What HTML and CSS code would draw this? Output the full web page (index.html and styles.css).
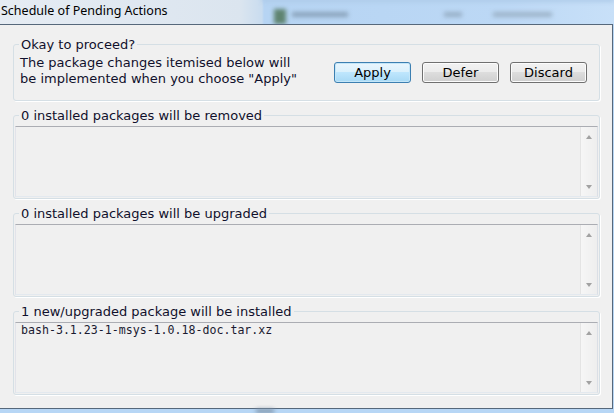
FILE: index.html
```html
<!doctype html>
<html>

<head>
    <link rel="stylesheet" href="styles.css">
</head>

<body>
    <div class="titlebar">
        <span class="title">Schedule of Pending Actions</span>
        <span class="glass glass-row"></span>
        <span class="glass glass-icon"></span>
        <span class="glass glass-name"></span>
        <span class="glass glass-type"></span>
        <span class="glass glass-date"></span>
    </div>

    <div class="window">
        <fieldset class="group">
            <legend>Okay to proceed?</legend>
            <div class="intro">
                <p class="intro-text">The package changes itemised below will<br>be implemented when you choose "Apply"</p>
                <div class="buttons">
                    <button class="btn btn-default">Apply</button>
                    <button class="btn">Defer</button>
                    <button class="btn">Discard</button>
                </div>
            </div>
        </fieldset>

        <fieldset class="group">
            <legend>0 installed packages will be removed</legend>
            <div class="listbox">
                <div class="items"></div>
                <div class="scrollbar"><span class="arrow up"></span><span class="arrow down"></span></div>
            </div>
        </fieldset>

        <fieldset class="group">
            <legend>0 installed packages will be upgraded</legend>
            <div class="listbox">
                <div class="items"></div>
                <div class="scrollbar"><span class="arrow up"></span><span class="arrow down"></span></div>
            </div>
        </fieldset>

        <fieldset class="group">
            <legend>1 new/upgraded package will be installed</legend>
            <div class="listbox">
                <div class="items">bash-3.1.23-1-msys-1.0.18-doc.tar.xz</div>
                <div class="scrollbar"><span class="arrow up"></span><span class="arrow down"></span></div>
            </div>
        </fieldset>
    </div>

    <div class="taskstrip"><span class="glass glass-thumb"></span></div>
</body>

</html>
```

FILE: styles.css
```css
body {
    margin: 0;
    width: 614px;
    height: 413px;
    overflow: hidden;
    background: #b8d6f4;
    font-family: "DejaVu Sans", sans-serif;
    color: #10102c;
}

/* glass title bar */
.titlebar {
    position: relative;
    height: 24px;
    overflow: hidden;
    background: linear-gradient(to right, #e6ecf3 0, #dbe5ef 240px, #c9dcef 262px, #b6d4f3 264px, #bcd8f5 500px, #c8e0f8 614px);
}

.title {
    display: block;
    padding-left: 1px;
    font-family: "Noto Sans", sans-serif;
    font-size: 12.5px;
    line-height: 21px;
    color: #000;
}

.glass {
    position: absolute;
    filter: blur(2px);
}

.glass-row {
    left: 262px;
    right: 0;
    top: -3px;
    height: 5px;
    background: #aecbe9;
}

.glass-icon {
    left: 274px;
    top: 9px;
    width: 12px;
    height: 15px;
    background: #5f8470;
}

.glass-name {
    left: 292px;
    top: 12px;
    width: 56px;
    height: 5px;
    background: #8aa3bb;
}

.glass-type {
    left: 444px;
    top: 12px;
    width: 18px;
    height: 5px;
    background: #98b0c7;
}

.glass-date {
    left: 493px;
    top: 12px;
    width: 59px;
    height: 5px;
    background: #9db4ca;
}

/* client area */
.window {
    width: 587px;
    padding: 12px 12px 13px 13px;
    background: #f0f0f0;
    border: 1px solid #56687b;
    border-left: none;
}

.group {
    margin: 7px 0 0;
    padding: 0 1px 1px;
    border: 1px solid #d5dfe5;
    border-radius: 3px;
    box-shadow: 1px 1px 0 #fff;
}

.group:first-child {
    margin-top: 0;
}

.group legend {
    margin-left: 4px;
    padding: 0 2px;
    font-size: 13px;
    line-height: 15px;
}

.intro {
    display: flex;
    justify-content: space-between;
    align-items: center;
    padding: 3px 11px 12px 5px;
}

.intro-text {
    margin: 0;
    font-size: 13px;
    line-height: 16px;
}

.buttons {
    display: flex;
    gap: 11px;
    margin-top: 2px;
}

.btn {
    width: 77px;
    height: 21px;
    padding: 0;
    font-family: "DejaVu Sans", sans-serif;
    font-size: 13px;
    color: #000;
    border: 1px solid #707070;
    border-radius: 3px;
    background: linear-gradient(#f2f2f2 0, #ebebeb 50%, #dddddd 50%, #cfcfcf 100%);
    box-shadow: inset 0 0 0 1px #fcfcfc;
}

.btn-default {
    border-color: #3c7fb1;
    background: linear-gradient(#eaf6fd 0, #d9f0fc 50%, #bee6fd 50%, #a7d9f5 100%);
    box-shadow: inset 0 0 0 1px #c4e6f8;
}

/* read-only list */
.listbox {
    display: flex;
    height: 71px;
    margin-top: 3px;
    box-sizing: border-box;
    border: 1px solid;
    border-color: #abadb3 #dbdfe6 #e3e9ef #e2e3ea;
    background: #f0f0f0;
}

.items {
    flex: 1;
    padding: 0 5px;
    font-family: "DejaVu Sans Mono", monospace;
    font-size: 11.6px;
    line-height: 14px;
    color: #1a1a30;
}

.scrollbar {
    display: flex;
    flex-direction: column;
    justify-content: space-between;
    align-items: center;
    width: 16px;
    padding: 8px 0 7px;
    border-left: 1px solid #e4e4e4;
    background: linear-gradient(to right, #f6f6f6, #eeeeee);
}

.arrow {
    width: 0;
    height: 0;
    border-left: 3.5px solid transparent;
    border-right: 3.5px solid transparent;
}

.arrow.up {
    border-bottom: 4px solid #a2a2a2;
}

.arrow.down {
    border-top: 4px solid #a2a2a2;
}

/* glass strip below the window */
.taskstrip {
    position: relative;
    height: 4px;
    background: #b7d6f5;
}

.glass-thumb {
    left: 256px;
    top: 0;
    width: 18px;
    height: 4px;
    background: #7f93a8;
}
```
